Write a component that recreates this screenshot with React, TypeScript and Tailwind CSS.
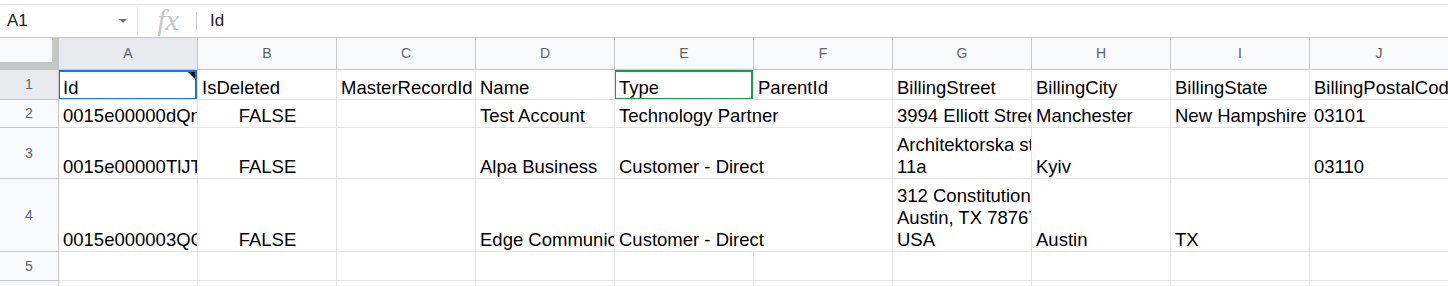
import React from 'react';

const COLS = ['A', 'B', 'C', 'D', 'E', 'F', 'G', 'H', 'I', 'J'];
const ROW_HEIGHTS = [30, 28, 51, 73, 29, 10];

type CellData = { text?: string; center?: boolean; overflow?: boolean };

const DATA: CellData[][] = [
  [
    { text: 'Id' },
    { text: 'IsDeleted' },
    { text: 'MasterRecordId' },
    { text: 'Name' },
    { text: 'Type' },
    { text: 'ParentId' },
    { text: 'BillingStreet' },
    { text: 'BillingCity' },
    { text: 'BillingState' },
    { text: 'BillingPostalCode' },
  ],
  [
    { text: '0015e00000dQnPQAA0' },
    { text: 'FALSE', center: true },
    {},
    { text: 'Test Account' },
    { text: 'Technology Partner', overflow: true },
    {},
    { text: '3994 Elliott Street' },
    { text: 'Manchester' },
    { text: 'New Hampshire' },
    { text: '03101' },
  ],
  [
    { text: '0015e00000TlJTKAA3' },
    { text: 'FALSE', center: true },
    {},
    { text: 'Alpa Business' },
    { text: 'Customer - Direct', overflow: true },
    {},
    { text: 'Architektorska street,\n11a' },
    { text: 'Kyiv' },
    {},
    { text: '03110' },
  ],
  [
    { text: '0015e000003QGfGAAW' },
    { text: 'FALSE', center: true },
    {},
    { text: 'Edge Communications' },
    { text: 'Customer - Direct', overflow: true },
    {},
    { text: '312 Constitution Place\nAustin, TX 78767\nUSA' },
    { text: 'Austin' },
    { text: 'TX' },
    {},
  ],
  [{}, {}, {}, {}, {}, {}, {}, {}, {}, {}],
  [{}, {}, {}, {}, {}, {}, {}, {}, {}, {}],
];

function FormulaBar() {
  return (
    <div className="mt-[4px] h-[34px] flex items-center border-t border-b border-t-[#e3e3e3] border-b-[#c4c7c5] bg-white">
      <div className="w-[137px] h-full flex items-center justify-between pl-[7px] pr-[10px]">
        <span className="text-[17px] text-[#202124]">A1</span>
        <span className="w-0 h-0 border-l-[4px] border-r-[4px] border-t-[4px] border-l-transparent border-r-transparent border-t-[#6f7377]" />
      </div>
      <div className="w-px h-[28px] bg-[#e1e3e1]" />
      <div className="w-[58px] flex items-center justify-center">
        <span className="font-['Liberation_Serif',serif] italic text-[30px] leading-none text-[#c4c7c5] -mt-[3px] ml-[2px]">fx</span>
      </div>
      <div className="w-px h-[18px] bg-[#c4c7c5]" />
      <span className="ml-[13px] text-[17px] text-[#202124]">Id</span>
    </div>
  );
}

export default function App() {
  return (
    <div className="w-[1448px] h-[286px] overflow-hidden bg-white font-['Liberation_Sans',Arial,sans-serif]">
      <FormulaBar />
      <div className="grid w-[1449px] grid-cols-[59px_repeat(10,139px)] grid-rows-[32px_30px_28px_51px_73px_29px_10px]">
        {/* corner with freeze handles */}
        <div className="bg-[#f8f9fa] border-r-[7px] border-b-[8px] border-[#c4c7c5]" />
        {COLS.map((c) => (
          <div
            key={c}
            className={`flex items-center justify-center border-r border-b border-[#c4c7c5] text-[14px] text-[#5f6368] ${
              c === 'A' ? 'bg-[#e8eaed]' : 'bg-[#f8f9fa]'
            }`}
          >
            {c}
          </div>
        ))}

        {DATA.map((row, r) => (
          <React.Fragment key={r}>
            <div
              className={`flex items-center justify-center border-r border-b border-[#c4c7c5] text-[14px] text-[#5f6368] ${
                r === 0 ? 'bg-[#e8eaed]' : 'bg-[#f8f9fa]'
              }`}
              style={{ height: ROW_HEIGHTS[r] }}
            >
              {r < 5 ? r + 1 : ''}
            </div>
            {row.map((cell, c) => (
              <div
                key={c}
                className={`relative flex items-end border-b border-[#e2e3e3] pl-[4px] pr-[3px] text-[18.5px] leading-[22px] text-black whitespace-pre ${
                  cell.overflow ? 'overflow-visible border-r border-r-transparent z-10' : 'overflow-hidden border-r'
                } ${cell.center ? 'justify-center' : ''}`}
              >
                {cell.text}
                {r === 0 && c === 0 && (
                  <>
                    <div className="absolute -left-px top-0 right-0 bottom-[-1px] border-2 border-[#1a73e8]" />
                    <div className="absolute right-[2px] top-[2px] w-0 h-0 border-t-[7px] border-l-[7px] border-t-black border-l-transparent" />
                  </>
                )}
                {r === 0 && c === 4 && (
                  <div className="absolute -left-px top-0 right-0 bottom-[-1px] border-2 border-[#1e9a56]" />
                )}
              </div>
            ))}
          </React.Fragment>
        ))}
      </div>
    </div>
  );
}
